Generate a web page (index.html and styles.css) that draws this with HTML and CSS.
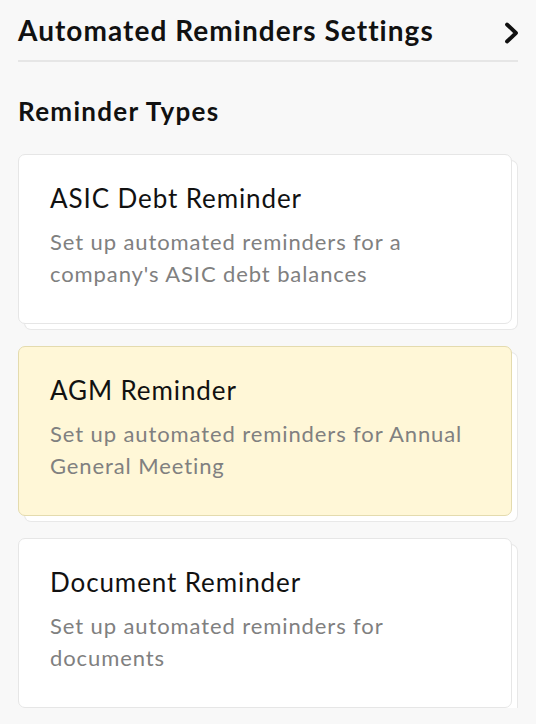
FILE: index.html
```html
<!DOCTYPE html>
<html lang="en">
<head>
<meta charset="utf-8">
<title>Automated Reminders Settings</title>
<link rel="stylesheet" href="styles.css">
</head>
<body>
<div class="page">
  <div class="header">
    <h1 class="header-title">Automated Reminders Settings</h1>
    <svg class="chevron" width="15" height="24" viewBox="0 0 15 24" aria-hidden="true">
      <polyline points="3,3.5 12,12 3,20.5" fill="none" stroke="#111" stroke-width="3.8" stroke-linecap="round" stroke-linejoin="round"/>
    </svg>
  </div>
  <div class="divider"></div>
  <h2 class="section-title">Reminder Types</h2>
  <div class="cards">
    <div class="card">
      <div class="card-title">ASIC Debt Reminder</div>
      <div class="card-desc">Set up automated reminders for a company's ASIC debt balances</div>
    </div>
    <div class="card card-active">
      <div class="card-title">AGM Reminder</div>
      <div class="card-desc">Set up automated reminders for Annual General Meeting</div>
    </div>
    <div class="card">
      <div class="card-title">Document Reminder</div>
      <div class="card-desc">Set up automated reminders for documents</div>
    </div>
  </div>
</div>
</body>
</html>
```

FILE: styles.css
```css
html, body {
  margin: 0;
  padding: 0;
  background: #f8f8f8;
}

body {
  font-family: "Lato", "Liberation Sans", sans-serif;
  color: #111;
}

.page {
  padding: 13px 18px 0 18px;
}

.header {
  display: flex;
  justify-content: space-between;
  align-items: center;
}

.header-title {
  margin: 0;
  font-size: 28px;
  line-height: 34px;
  font-weight: 700;
  letter-spacing: 1.05px;
  color: #111;
}

.chevron {
  display: block;
  margin-top: 5px;
  margin-right: -1px;
}

.divider {
  margin-top: 13px;
  height: 2px;
  background: #e6e6e6;
}

.section-title {
  margin: 34px 0 0 0;
  font-size: 26px;
  line-height: 30px;
  font-weight: 700;
  letter-spacing: 1.3px;
  color: #111;
}

.cards {
  margin-top: 28px;
  display: flex;
  flex-direction: column;
  gap: 22px;
  margin-right: 6px;
}

.card {
  background: #fff;
  border: 1px solid #e6e6e6;
  border-radius: 7px;
  padding: 27px 30px 33px 31px;
  box-shadow: 6px 6px 0 -1px #ffffff, 6px 6px 0 0 #e8e8e8;
}

.card-active {
  background: #fff7d7;
  border-color: #e4dbae;
}

.card-title {
  font-size: 26px;
  line-height: 32px;
  letter-spacing: 0.9px;
  color: #111;
}

.card-desc {
  margin-top: 12px;
  font-size: 22px;
  line-height: 32px;
  letter-spacing: 0.9px;
  color: #808080;
}
```
